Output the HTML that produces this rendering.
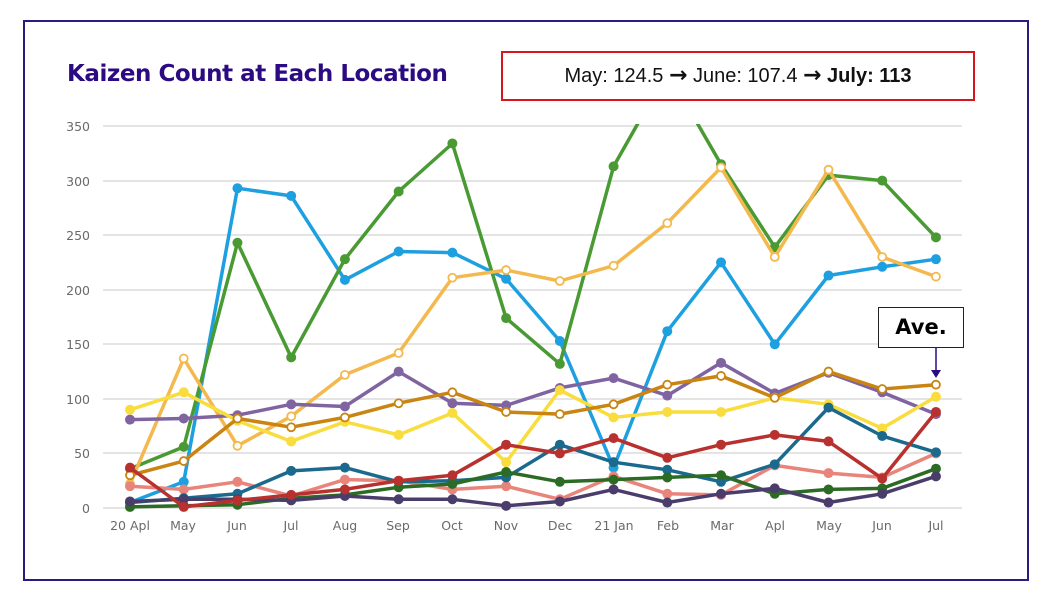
<!DOCTYPE html>
<html><head><meta charset="utf-8"><style>
body{margin:0;background:#fff;width:1050px;height:600px;overflow:hidden;font-family:"Liberation Sans",sans-serif}
#frame{position:absolute;left:23px;top:20px;width:1002px;height:557px;border:2px solid #2e1a7a}
#title{position:absolute;left:67px;top:61px;font-family:"DejaVu Sans",sans-serif;font-weight:bold;font-size:23px;color:#2b0a82;letter-spacing:-0.45px}
#box{position:absolute;left:501px;top:51px;width:470px;height:46px;border:2px solid #d8141c;font-size:20px;line-height:46px;text-align:center;color:#111}
.ar{font-family:"DejaVu Sans",sans-serif;font-weight:bold;font-size:22px}
svg{position:absolute;left:0;top:0}
#ave{position:absolute;left:878px;top:307px;width:84px;height:39px;border:1px solid #222;background:#fff;font-family:"DejaVu Sans",sans-serif;font-weight:bold;font-size:21px;line-height:39px;text-align:center}
</style></head><body>
<div id="frame"></div>
<div id="title">Kaizen Count at Each Location</div>
<div id="box">May: 124.5 <span class="ar">→</span> June: 107.4 <span class="ar">→</span> <b>July: 113</b></div>
<svg id="s" width="1050" height="600" font-family="DejaVu Sans, sans-serif" font-size="12.5" fill="#6a6a6a">
<g stroke="#dcdcdc" stroke-width="1.5">
<line x1="103" x2="962" y1="126" y2="126"/><line x1="103" x2="962" y1="181" y2="181"/><line x1="103" x2="962" y1="235" y2="235"/><line x1="103" x2="962" y1="290" y2="290"/><line x1="103" x2="962" y1="344" y2="344"/><line x1="103" x2="962" y1="399" y2="399"/><line x1="103" x2="962" y1="453" y2="453"/><line x1="103" x2="962" y1="508" y2="508"/></g>
<g text-anchor="end"><text x="90" y="131">350</text><text x="90" y="186">300</text><text x="90" y="240">250</text><text x="90" y="295">200</text><text x="90" y="349">150</text><text x="90" y="404">100</text><text x="90" y="458">50</text><text x="90" y="513">0</text></g>
<g text-anchor="middle"><text x="130" y="530">20 Apl</text><text x="183" y="530">May</text><text x="237" y="530">Jun</text><text x="291" y="530">Jul</text><text x="345" y="530">Aug</text><text x="398" y="530">Sep</text><text x="452" y="530">Oct</text><text x="506" y="530">Nov</text><text x="560" y="530">Dec</text><text x="614" y="530">21 Jan</text><text x="668" y="530">Feb</text><text x="722" y="530">Mar</text><text x="775" y="530">Apl</text><text x="829" y="530">May</text><text x="882" y="530">Jun</text><text x="936" y="530">Jul</text></g>
<defs><clipPath id="c"><rect x="100" y="124" width="870" height="400"/></clipPath></defs>
<g id="L" clip-path="url(#c)"></g>
<line x1="936" y1="346" x2="936" y2="372" stroke="#2b0a82" stroke-width="1.5"/><path d="M931 370 L941 370 L936 378Z" fill="#2b0a82"/>
</svg>
<div id="ave">Ave.</div>
<script>
var S=[
["#1ea0e0",0,[5,24,293,286,209,235,234,210,153,37,162,225,150,213,221,228]],
["#4a9a34",0,[36,56,243,138,228,290,334,174,132,313,400,315,239,305,300,248]],
["#f4b94e",1,[22,137,57,84,122,142,211,218,208,222,261,312,230,310,230,212]],
["#8064a2",0,[81,82,85,95,93,125,96,94,110,119,103,133,105,124,106,86]],
["#f9dc3e",0,[90,106,80,61,79,67,87,42,108,83,88,88,101,95,73,102]],
["#c98412",1,[30,43,82,74,83,96,106,88,86,95,113,121,101,125,109,113]],
["#e8847a",0,[20,17,24,11,26,25,17,20,8,29,13,12,39,32,28,50]],
["#1b6a8e",0,[5,9,13,34,37,24,25,28,58,42,35,24,40,92,66,51]],
["#2c6b24",0,[1,2,3,9,12,19,22,33,24,26,28,30,13,17,18,36]],
["#4a3c6b",0,[6,8,8,7,11,8,8,2,6,17,5,13,18,5,13,29]],
["#b8312e",0,[37,1,7,12,17,25,30,58,50,64,46,58,67,61,27,88]]];
var h="";
S.forEach(function(s){var p=s[2].map(function(v,i){return [130+i*53.73,508-v*1.0914]});
h+='<polyline fill="none" stroke="'+s[0]+'" stroke-width="3.5" stroke-linejoin="round" points="'+p.map(function(q){return q[0].toFixed(1)+","+q[1].toFixed(1)}).join(" ")+'"/>';
p.forEach(function(q){h+=s[1]?'<circle cx="'+q[0]+'" cy="'+q[1]+'" r="4" fill="#fff" stroke="'+s[0]+'" stroke-width="1.8"/>':'<circle cx="'+q[0]+'" cy="'+q[1]+'" r="5" fill="'+s[0]+'"/>';});});
document.getElementById("L").innerHTML=h;
</script>
</body></html>
